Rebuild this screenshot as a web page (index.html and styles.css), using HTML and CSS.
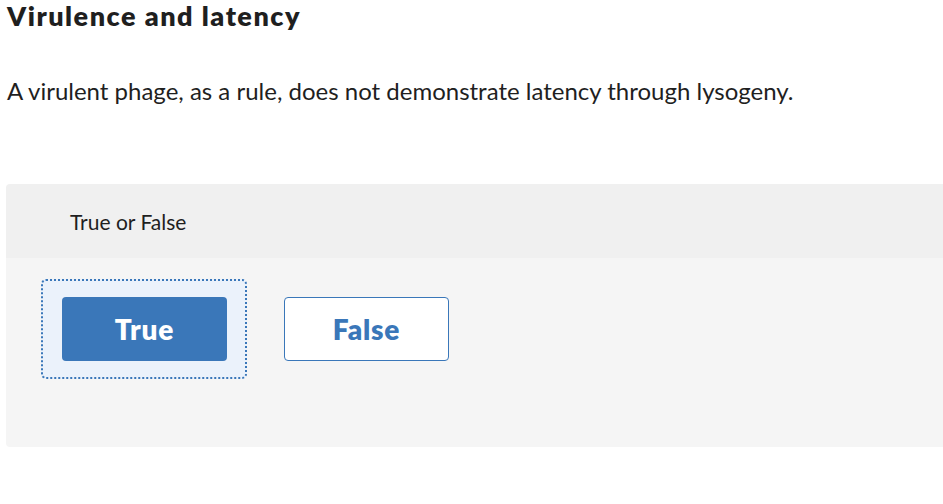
FILE: index.html
```html
<!DOCTYPE html>
<html>
<head>
<meta charset="utf-8">
<link rel="stylesheet" href="styles.css">
</head>
<body>
<div class="page">
  <h1 class="title">Virulence and latency</h1>
  <p class="prompt">A virulent phage, as a rule, does not demonstrate latency through lysogeny.</p>
  <div class="card">
    <div class="card-head">True or False</div>
    <div class="card-body">
      <div class="choices">
        <div class="focus-ring"><button class="btn btn-primary">True</button></div>
        <button class="btn btn-outline">False</button>
      </div>
    </div>
  </div>
</div>
</body>
</html>
```
FILE: styles.css
```css
html, body {
  margin: 0;
  padding: 0;
  background: #ffffff;
  overflow: hidden;
}
.page {
  font-family: Lato, "Liberation Sans", sans-serif;
  color: #1f1f1f;
  padding-left: 6px;
}
.title {
  margin: 0;
  padding: 0 0 0 1px;
  font-size: 27px;
  font-weight: 800;
  letter-spacing: 1.5px;
  line-height: 32px;
  color: #1f1f1f;
}
.prompt {
  margin: 44px 0 0 0;
  padding-left: 1px;
  font-size: 24px;
  line-height: 30px;
  color: #1f1f1f;
}
.card {
  margin-top: 78px;
  width: 960px;
  border-radius: 4px 0 0 4px;
  overflow: hidden;
}
.card-head {
  background: #f0f0f0;
  height: 74px;
  display: flex;
  align-items: center;
  padding-left: 64px;
  font-size: 21px;
  color: #1f1f1f;
}
.card-body {
  background: #f5f5f5;
  height: 189px;
  padding: 21px 0 0 35px;
  box-sizing: border-box;
}
.choices {
  display: flex;
  align-items: center;
  gap: 37px;
}
.focus-ring {
  border: 2px dotted #3a77b9;
  border-radius: 5px;
  background: #ebf2fb;
  padding: 16px 18px 16px 19px;
}
.btn {
  display: block;
  width: 165px;
  height: 64px;
  border-radius: 4px;
  font-family: inherit;
  font-size: 28px;
  font-weight: 800;
  letter-spacing: 0.8px;
  cursor: pointer;
  box-sizing: border-box;
}
.btn-primary {
  background: #3a77b9;
  color: #ffffff;
  border: none;
}
.btn-outline {
  background: #ffffff;
  color: #3a77b9;
  border: 1px solid #3a77b9;
}
```
